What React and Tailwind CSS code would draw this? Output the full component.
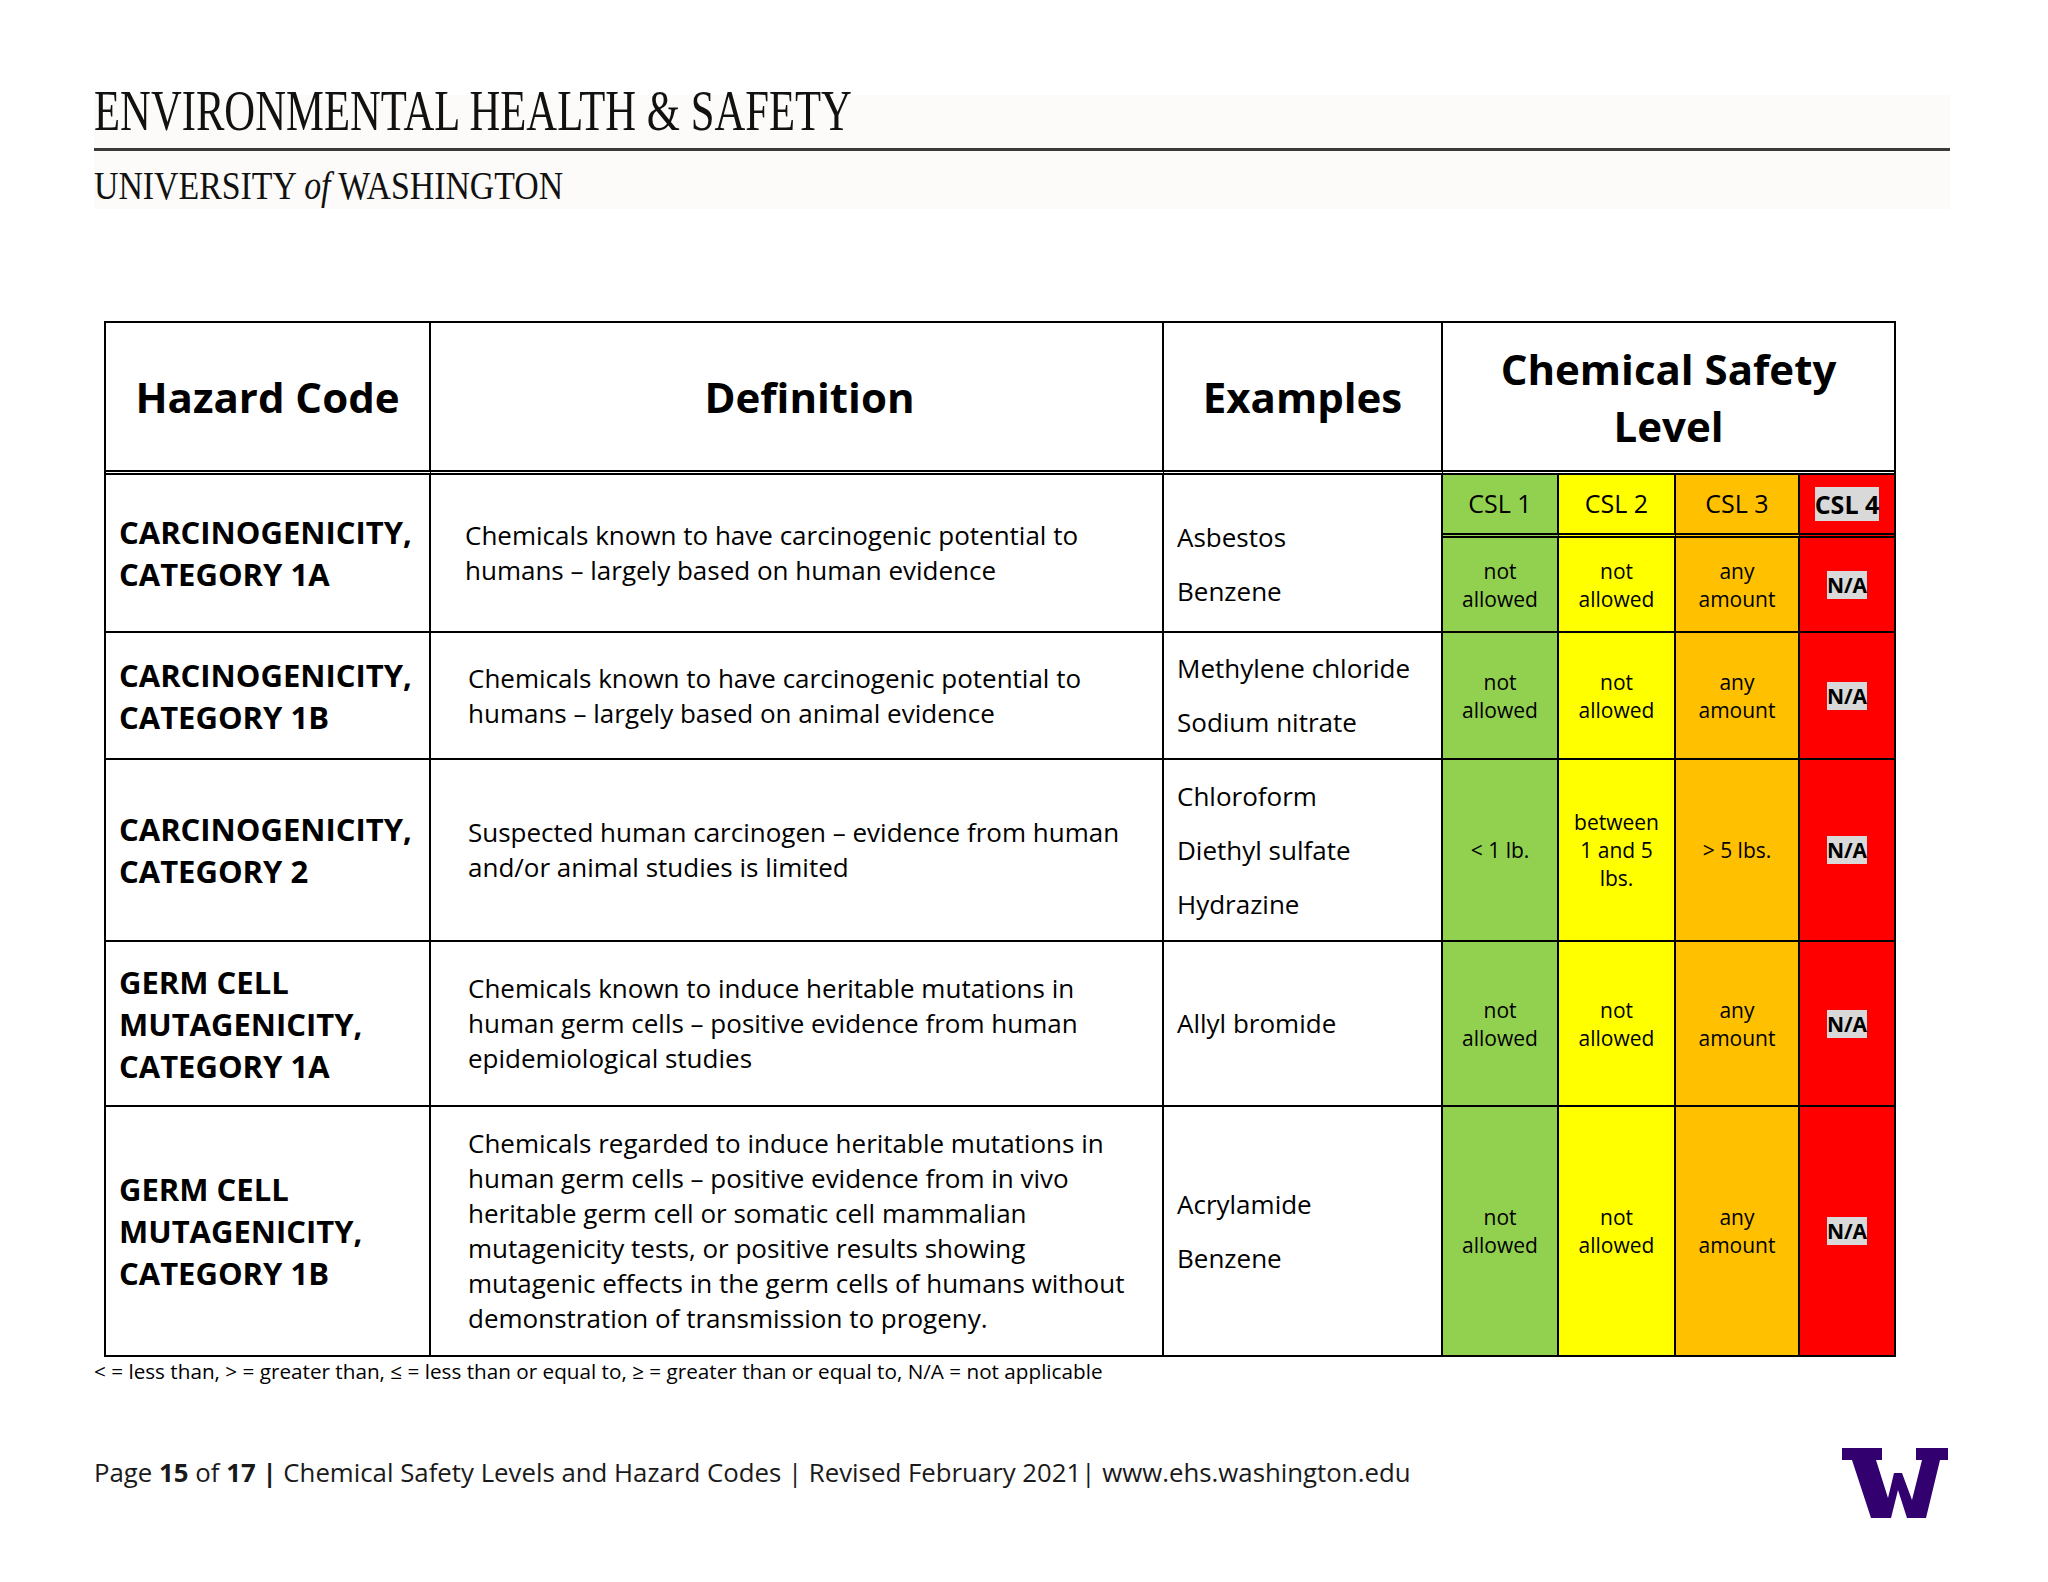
import React from "react";

const rows = [
  {
    code: ["CARCINOGENICITY,", "CATEGORY 1A"],
    def: ["Chemicals known to have carcinogenic potential to", "humans – largely based on human evidence"],
    ex: ["Asbestos", "Benzene"],
    csl: [["not", "allowed"], ["not", "allowed"], ["any", "amount"]],
  },
  {
    code: ["CARCINOGENICITY,", "CATEGORY 1B"],
    def: ["Chemicals known to have carcinogenic potential to", "humans – largely based on animal evidence"],
    ex: ["Methylene chloride", "Sodium nitrate"],
    csl: [["not", "allowed"], ["not", "allowed"], ["any", "amount"]],
  },
  {
    code: ["CARCINOGENICITY,", "CATEGORY 2"],
    def: ["Suspected human carcinogen – evidence from human", "and/or animal studies is limited"],
    ex: ["Chloroform", "Diethyl sulfate", "Hydrazine"],
    csl: [["< 1 lb."], ["between", "1 and 5", "lbs."], ["> 5 lbs."]],
  },
  {
    code: ["GERM CELL", "MUTAGENICITY,", "CATEGORY 1A"],
    def: [
      "Chemicals known to induce heritable mutations in",
      "human germ cells – positive evidence from human",
      "epidemiological studies",
    ],
    ex: ["Allyl bromide"],
    csl: [["not", "allowed"], ["not", "allowed"], ["any", "amount"]],
  },
  {
    code: ["GERM CELL", "MUTAGENICITY,", "CATEGORY 1B"],
    def: [
      "Chemicals regarded to induce heritable mutations in",
      "human germ cells – positive evidence from in vivo",
      "heritable germ cell or somatic cell mammalian",
      "mutagenicity tests, or positive results showing",
      "mutagenic effects in the germ cells of humans without",
      "demonstration of transmission to progeny.",
    ],
    ex: ["Acrylamide", "Benzene"],
    csl: [["not", "allowed"], ["not", "allowed"], ["any", "amount"]],
    last: true,
  },
];

const cslBg = ["bg-[#92d050]", "bg-[#ffff00]", "bg-[#ffc000]"];

function Lines({ items }) {
  return items.map((t, i) => (
    <span key={i} className="block whitespace-nowrap">
      {t}
    </span>
  ));
}

function WLogo() {
  return (
    <svg width="106" height="70" viewBox="0 0 106 70">
      <polygon
        fill="#33006f"
        points="0,0 40,0 40,12 34,12 46,50 52,25 60,25 70,52 80,12 74,12 74,0 106,0 106,12 98,12 84,70 65,70 56,42 49,70 29,70 10,12 0,12"
      />
    </svg>
  );
}

export default function App() {
  return (
    <div className="w-[2048px] h-[1582px] bg-white text-black font-['Open_Sans',sans-serif] overflow-hidden">
      {/* letterhead */}
      <div className="ml-[94px] mt-[95px] pb-[2px] w-[1856px] flex flex-col bg-[#fcfbf9] font-['Liberation_Serif',serif] text-[#111]">
        <div className="-mt-[12px] h-[56px] text-[56px] leading-[56px] whitespace-nowrap">
          <span className="inline-block origin-left scale-x-[0.762]">ENVIRONMENTAL HEALTH &amp; SAFETY</span>
        </div>
        <div className="mt-[9px] h-[3px] bg-[#3a3a3a]" />
        <div className="mt-[14px] h-[42px] text-[41px] leading-[41px] whitespace-nowrap">
          <span className="inline-block origin-left scale-x-[0.825]">
            UNIVERSITY <i>of</i> WASHINGTON
          </span>
        </div>
      </div>

      {/* table */}
      <div className="ml-[104px] mt-[112px] w-[1792px] border-2 border-black">
        <div className="grid grid-cols-[325px_733px_279px_116px_117px_124px_94px] grid-rows-[152px_63px_95px_127px_182px_165px_248px]">
          <div className="flex items-center justify-center border-r-2 border-b-[5px] border-double border-black text-[42px] leading-[57px] font-bold">
            Hazard Code
          </div>
          <div className="flex items-center justify-center pl-[26px] border-r-2 border-b-[5px] border-double border-black text-[42px] leading-[57px] font-bold">
            Definition
          </div>
          <div className="flex items-center justify-center border-r-2 border-b-[5px] border-double border-black text-[42px] leading-[57px] font-bold">
            Examples
          </div>
          <div className="col-span-4 flex flex-col items-center justify-center border-b-[5px] border-double border-black text-[42px] leading-[57px] font-bold text-center">
            <span>Chemical Safety</span>
            <span>Level</span>
          </div>

          {rows.map((r, ri) => {
            const first = ri === 0;
            const bb = r.last ? "" : "border-b-2";
            const span = first ? "row-span-2" : "";
            return (
              <React.Fragment key={ri}>
                <div
                  className={`${span} ${bb} border-r-2 border-black flex flex-col justify-center pl-[13px] text-[31px] leading-[42px] font-bold`}
                >
                  <Lines items={r.code} />
                </div>
                <div
                  className={`${span} ${bb} border-r-2 border-black flex flex-col justify-center ${
                    first ? "pl-[34px]" : "pl-[37px]"
                  } text-[26px] leading-[35px]`}
                >
                  <Lines items={r.def} />
                </div>
                <div
                  className={`${span} ${bb} border-r-2 border-black flex flex-col justify-center gap-[19px] pl-[13px] ${
                    first ? "pt-[22px]" : ""
                  } text-[26px] leading-[35px]`}
                >
                  <Lines items={r.ex} />
                </div>
                {first && (
                  <>
                    <div className="border-r-2 border-b-[5px] border-double border-black bg-[#92d050] flex items-center justify-center text-[25px]">
                      CSL 1
                    </div>
                    <div className="border-r-2 border-b-[5px] border-double border-black bg-[#ffff00] flex items-center justify-center text-[25px]">
                      CSL 2
                    </div>
                    <div className="border-r-2 border-b-[5px] border-double border-black bg-[#ffc000] flex items-center justify-center text-[25px]">
                      CSL 3
                    </div>
                    <div className="border-b-[5px] border-double border-black bg-[#ff0000] flex items-center justify-center text-[25px]">
                      <span className="bg-[#d9d9d9] font-bold leading-[34px]">CSL 4</span>
                    </div>
                  </>
                )}
                {r.csl.map((c, ci) => (
                  <div
                    key={ci}
                    className={`${cslBg[ci]} ${bb} border-r-2 border-black flex flex-col items-center justify-center text-center text-[21px] leading-[28px]`}
                  >
                    <Lines items={c} />
                  </div>
                ))}
                <div
                  className={`${bb} border-black bg-[#ff0000] flex items-center justify-center text-[21px] leading-[28px]`}
                >
                  <span className="bg-[#d9d9d9] font-bold">N/A</span>
                </div>
              </React.Fragment>
            );
          })}
        </div>
      </div>

      {/* footnote */}
      <div className="ml-[94px] mt-[1px] text-[20.7px] leading-[26px] whitespace-nowrap">
        &lt; = less than, &gt; = greater than, ≤ = less than or equal to, ≥ = greater than or equal to, N/A = not applicable
      </div>

      {/* footer */}
      <div className="mt-[64px] ml-[94px] mr-[100px] flex items-start justify-between">
        <div className="mt-[7px] text-[25.8px] leading-[35px] whitespace-nowrap text-[#1a1a1a]">
          Page <b>15</b> of <b>17</b> <b>|</b> Chemical Safety Levels and Hazard Codes | Revised February 2021| www.ehs.washington.edu
        </div>
        <WLogo />
      </div>
    </div>
  );
}
